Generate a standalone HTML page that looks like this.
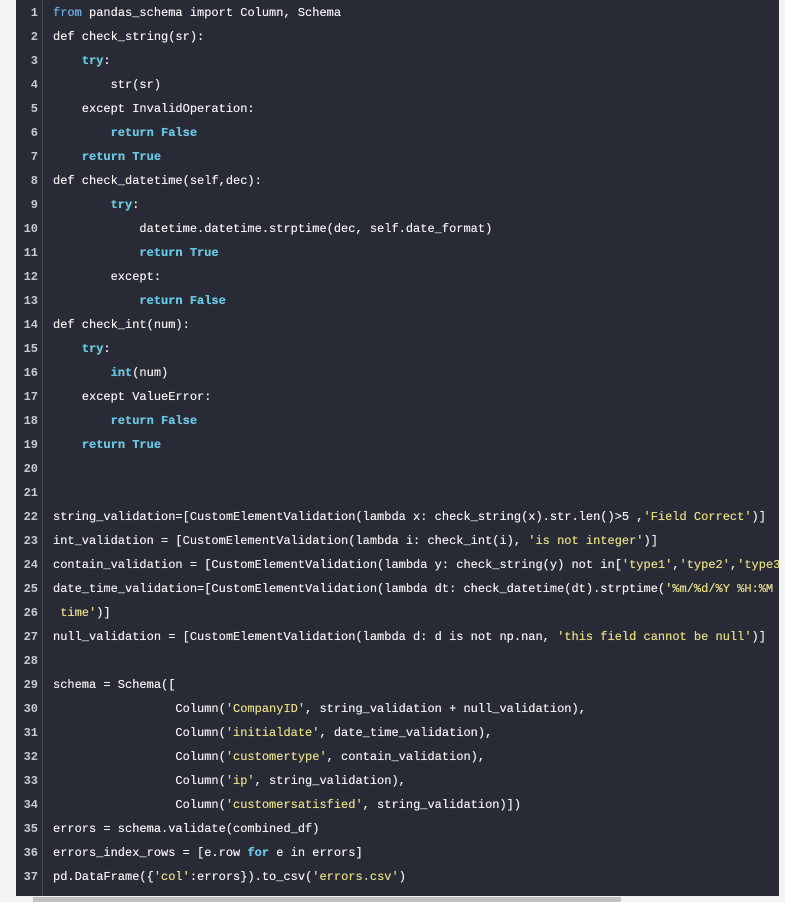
<!DOCTYPE html>
<html><head><meta charset="utf-8"><style>
html,body{margin:0;padding:0;background:#f3f3f3;width:785px;height:902px;overflow:hidden}
.box{position:absolute;left:16px;top:0;width:763px;height:896px;background:#282a35;overflow:hidden}
.sep{position:absolute;left:26px;top:0;width:1px;height:896px;background:#4a4c58}
.nums{position:absolute;left:0;top:1px;width:22px;text-align:right;font:bold 12px/24px "Liberation Mono",monospace;color:#c8c9cf}
pre{position:absolute;left:37px;top:1px;margin:0;font:12px/24px "Liberation Mono",monospace;color:#f2f2f2;white-space:pre;text-shadow:0 0 0.4px #f2f2f2}
.k{color:#5cc8e8;font-weight:bold}
.b{color:#5aa6e8}
.s{color:#e6db74}
.sb{position:absolute;left:33px;top:897px;width:588px;height:5px;background:#c1c1c1}
</style></head><body>
<div class="box"><div class="nums">1<br>2<br>3<br>4<br>5<br>6<br>7<br>8<br>9<br>10<br>11<br>12<br>13<br>14<br>15<br>16<br>17<br>18<br>19<br>20<br>21<br>22<br>23<br>24<br>25<br>26<br>27<br>28<br>29<br>30<br>31<br>32<br>33<br>34<br>35<br>36<br>37</div><div class="sep"></div>
<pre><span class="b">from</span> pandas_schema import Column, Schema
def check_string(sr):
    <span class="k">try</span>:
        str(sr)
    except InvalidOperation:
        <span class="k">return False</span>
    <span class="k">return True</span>
def check_datetime(self,dec):
        <span class="k">try</span>:
            datetime.datetime.strptime(dec, self.date_format)
            <span class="k">return True</span>
        except:
            <span class="k">return False</span>
def check_int(num):
    <span class="k">try</span>:
        <span class="k">int</span>(num)
    except ValueError:
        <span class="k">return False</span>
    <span class="k">return True</span>


string_validation=[CustomElementValidation(lambda x: check_string(x).str.len()&gt;5 ,<span class="s">'Field Correct'</span>)]
int_validation = [CustomElementValidation(lambda i: check_int(i), <span class="s">'is not integer'</span>)]
contain_validation = [CustomElementValidation(lambda y: check_string(y) not in[<span class="s">'type1'</span>,<span class="s">'type2'</span>,<span class="s">'type3'</span>]
date_time_validation=[CustomElementValidation(lambda dt: check_datetime(dt).strptime(<span class="s">'%m/%d/%Y %H:%M</span>
<span class="s"> time'</span>)]
null_validation = [CustomElementValidation(lambda d: d is not np.nan, <span class="s">'this field cannot be null'</span>)]

schema = Schema([
                 Column(<span class="s">'CompanyID'</span>, string_validation + null_validation),
                 Column(<span class="s">'initialdate'</span>, date_time_validation),
                 Column(<span class="s">'customertype'</span>, contain_validation),
                 Column(<span class="s">'ip'</span>, string_validation),
                 Column(<span class="s">'customersatisfied'</span>, string_validation)])
errors = schema.validate(combined_df)
errors_index_rows = [e.row <span class="k">for</span> e in errors]
pd.DataFrame({<span class="s">'col'</span>:errors}).to_csv(<span class="s">'errors.csv'</span>)</pre></div>
<div class="sb"></div>
</body></html>
